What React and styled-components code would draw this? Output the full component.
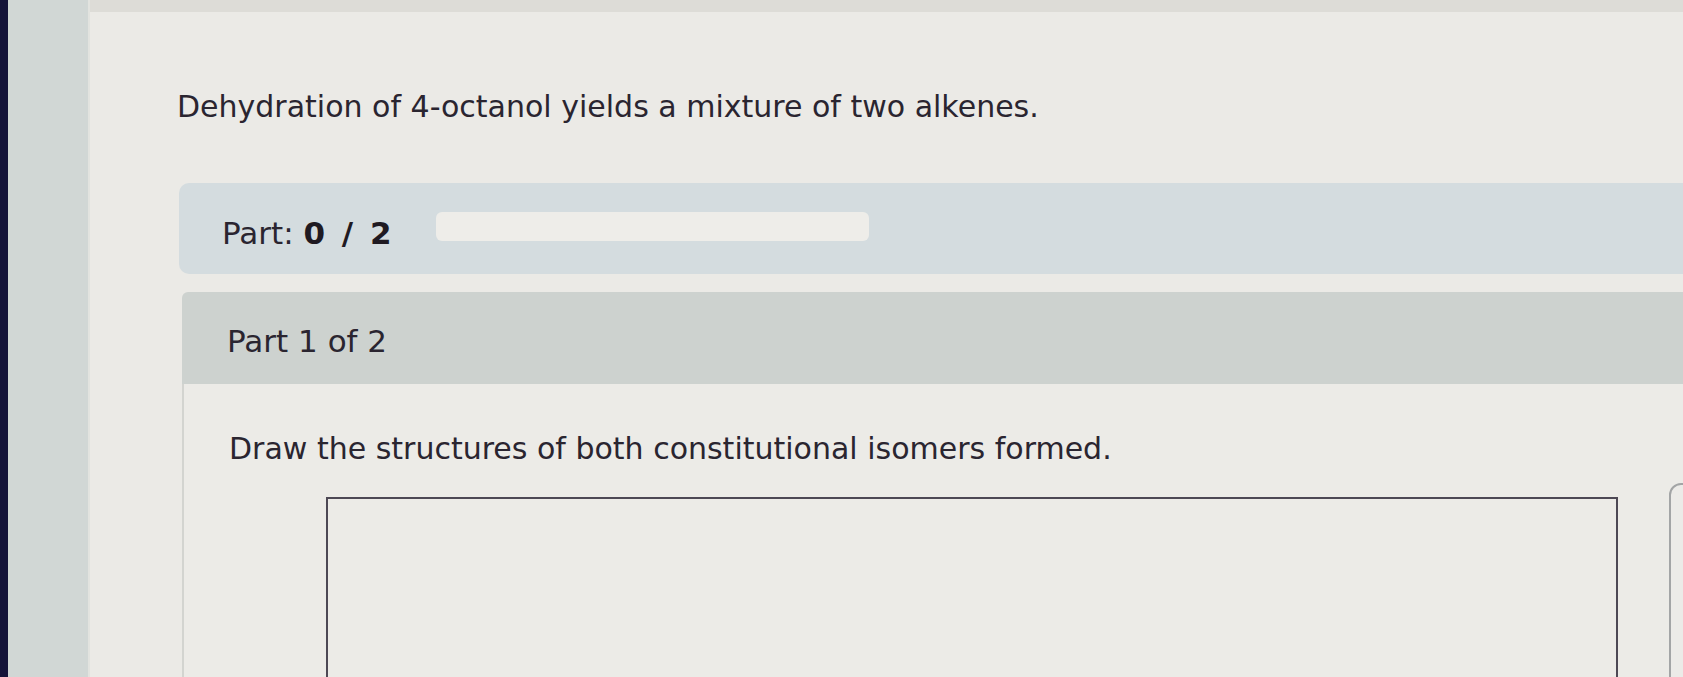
import styled, { createGlobalStyle } from 'styled-components';

const GlobalStyle = createGlobalStyle`
	html, body {
		margin: 0;
		padding: 0;
		height: 100%;
		overflow: hidden;
		background: #ebeae6;
	}
	#root {
		height: 100%;
	}
`;

const App = () => {
	return (
		<>
			<GlobalStyle />
			<Frame>
				<Bezel />
				<Sidebar />
				<Main>
					<TopStrip />
					<Content>
						<Question>Dehydration of 4-octanol yields a mixture of two alkenes.</Question>

						<ScoreBar>
							<ScoreLabel>
								Part: <b>0 / 2</b>
							</ScoreLabel>
							<Progress />
						</ScoreBar>

						<PartCard>
							<PartHeader>Part 1 of 2</PartHeader>
							<PartBody>
								<Prompt>Draw the structures of both constitutional isomers formed.</Prompt>
								<Workspace>
									<Canvas />
									<Toolbox />
								</Workspace>
							</PartBody>
						</PartCard>
					</Content>
				</Main>
			</Frame>
		</>
	);
};

const Frame = styled.div`
	display: flex;
	height: 100vh;
	overflow: hidden;
	font-family: "DejaVu Sans", Verdana, sans-serif;
	color: #2a2530;
`;

const Bezel = styled.div`
	flex: 0 0 8px;
	background: #15143a;
`;

const Sidebar = styled.div`
	flex: 0 0 80px;
	background: #d1d7d5;
	border-right: 2px solid #e2e3df;
`;

const Main = styled.main`
	flex: 1;
	display: flex;
	flex-direction: column;
	min-width: 0;
	overflow: hidden;
	background: #ebeae6;
`;

const TopStrip = styled.div`
	flex: 0 0 12px;
	background: #dddcd7;
`;

const Content = styled.div`
	display: flex;
	flex-direction: column;
	padding-left: 89px;
	margin-right: -40px;
`;

const Question = styled.h1`
	margin: 77px 0 0 -2px;
	font-size: 30px;
	font-weight: 400;
	line-height: 36px;
	white-space: nowrap;
`;

const ScoreBar = styled.div`
	display: flex;
	align-items: center;
	box-sizing: border-box;
	height: 91px;
	margin-top: 58px;
	padding: 8px 0 0 43px;
	background: #d4dcdf;
	border-radius: 10px;
`;

const ScoreLabel = styled.div`
	font-size: 31px;
	line-height: 36px;
	white-space: pre;

	b {
		font-weight: 700;
		color: #1f1a22;
		word-spacing: 6px;
	}
`;

const Progress = styled.div`
	width: 433px;
	height: 29px;
	margin: -12px 0 0 44px;
	background: #eeede9;
	border-radius: 6px;
`;

const PartCard = styled.section`
	display: flex;
	flex-direction: column;
	margin: 18px 0 0 3px;
`;

const PartHeader = styled.div`
	display: flex;
	align-items: center;
	box-sizing: border-box;
	height: 92px;
	padding: 6px 0 0 45px;
	font-size: 31px;
	line-height: 36px;
	background: #cdd2cf;
	border-radius: 6px 0 0 0;
`;

const PartBody = styled.div`
	display: flex;
	flex-direction: column;
	padding: 47px 0 0 45px;
	border-left: 2px solid #d3d4d0;
	background: #ecebe7;
	height: 400px;
`;

const Prompt = styled.p`
	margin: 0;
	font-size: 30px;
	line-height: 36px;
	white-space: nowrap;
`;

const Workspace = styled.div`
	display: flex;
	gap: 51px;
	margin: 30px 0 0 97px;
`;

const Canvas = styled.div`
	flex: 0 0 1292px;
	box-sizing: border-box;
	height: 300px;
	border: 2px solid #4d4854;
	background: #ecebe7;
`;

const Toolbox = styled.div`
	flex: 0 0 120px;
	height: 300px;
	margin-top: -14px;
	border: 2px solid #a3a5a6;
	border-radius: 12px;
	background: #ecebe8;
`;

export default App;
